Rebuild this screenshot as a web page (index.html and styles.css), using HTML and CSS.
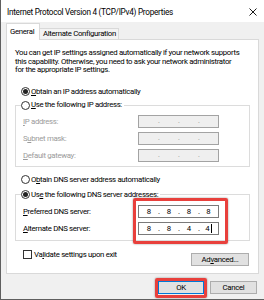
FILE: index.html
```html
<!DOCTYPE html>
<html>
<head>
<meta charset="utf-8">
<link rel="stylesheet" href="styles.css">
</head>
<body>
<div class="window">
  <div class="titlebar">
    <span class="title">Internet Protocol Version 4 (TCP/IPv4) Properties</span>
    <svg class="close" width="8" height="8" viewBox="0 0 8 8"><path d="M0.5 0.5L7.5 7.5M7.5 0.5L0.5 7.5" stroke="#1a1a1a" stroke-width="1" fill="none"/></svg>
  </div>
  <div class="main">
    <div class="tabs">
      <div class="tab active">General</div>
      <div class="tab alt">Alternate Configuration</div>
    </div>
    <div class="panel">
      <p class="desc">You can get IP settings assigned automatically if your network supports<br>this capability. Otherwise, you need to ask your network administrator<br>for the appropriate IP settings.</p>
      <div class="opt first"><span class="radio on"></span><span><u>O</u>btain an IP address automatically</span></div>
      <fieldset class="group g1">
        <legend class="opt"><span class="radio"></span><span><u>U</u>se the following IP address:</span></legend>
        <div class="row disabled"><span class="lbl"><u>I</u>P address:</span><span class="ip"><span class="seg"></span><span class="dot">.</span><span class="seg"></span><span class="dot">.</span><span class="seg"></span><span class="dot">.</span><span class="seg"></span></span></div>
        <div class="row disabled"><span class="lbl">S<u>u</u>bnet mask:</span><span class="ip"><span class="seg"></span><span class="dot">.</span><span class="seg"></span><span class="dot">.</span><span class="seg"></span><span class="dot">.</span><span class="seg"></span></span></div>
        <div class="row disabled"><span class="lbl"><u>D</u>efault gateway:</span><span class="ip"><span class="seg"></span><span class="dot">.</span><span class="seg"></span><span class="dot">.</span><span class="seg"></span><span class="dot">.</span><span class="seg"></span></span></div>
      </fieldset>
      <div class="opt second"><span class="radio"></span><span>O<u>b</u>tain DNS server address automatically</span></div>
      <fieldset class="group g2">
        <legend class="opt"><span class="radio on"></span><span>Us<u>e</u> the following DNS server addresses:</span></legend>
        <div class="rows">
          <div class="row"><span class="lbl"><u>P</u>referred DNS server:</span><span class="ip"><span class="seg">8</span><span class="dot">.</span><span class="seg">8</span><span class="dot">.</span><span class="seg">8</span><span class="dot">.</span><span class="seg">8</span></span></div>
          <div class="row"><span class="lbl"><u>A</u>lternate DNS server:</span><span class="ip"><span class="seg">8</span><span class="dot">.</span><span class="seg">8</span><span class="dot">.</span><span class="seg">4</span><span class="dot">.</span><span class="seg">4<span class="caret"></span></span></span></div>
          <span class="mark mark-dns"></span>
        </div>
      </fieldset>
      <div class="bottom">
        <div class="check"><span class="box"></span><span>Va<u>l</u>idate settings upon exit</span></div>
        <button class="btn adv">Ad<u>v</u>anced...</button>
      </div>
    </div>
    <div class="footer">
      <div class="okwrap"><button class="btn ok">OK</button><span class="mark mark-ok"></span></div>
      <button class="btn cancel">Cancel</button>
    </div>
  </div>
</div>
</body>
</html>
```
FILE: styles.css
```css
* { box-sizing: border-box; }
body {
  margin: 0;
  font-family: Roboto, "Noto Sans", sans-serif;
  font-size: 7.8px;
  letter-spacing: -0.33px;
  color: #000;
}
u { text-underline-offset: 1px; }
.window {
  width: 264px;
  height: 300px;
  background: #f0f0f0;
  border-left: 1px solid #5f5f5f;
  border-bottom: 1px solid #5f5f5f;
  display: flex;
  flex-direction: column;
  overflow: hidden;
}
.titlebar {
  height: 22px;
  flex: none;
  background: #fff;
  display: flex;
  align-items: center;
  padding: 1px 7px 0 6px;
}
.title {
  flex: 1;
  font-size: 8.2px;
  letter-spacing: -0.27px;
  white-space: nowrap;
}
.close { display: block; flex: none; }
.main {
  padding: 1px 5px 0 5px;
  display: flex;
  flex-direction: column;
}
.tabs {
  display: flex;
  align-items: flex-end;
  height: 17px;
  margin-bottom: -1px;
  position: relative;
  z-index: 1;
}
.tab {
  border: 1px solid #d9d9d9;
  border-bottom: none;
  white-space: nowrap;
}
.tab.active {
  width: 34px;
  height: 17px;
  background: #fff;
  padding: 3px 0 0 3px;
  line-height: 10px;
}
.tab.alt {
  width: 80px;
  height: 11px;
  margin-left: -1px;
  margin-bottom: 1px;
  background: #f3f3f3;
  padding: 0 0 0 3px;
  line-height: 9px;
}
.panel {
  background: #fff;
  border: 1px solid #d9d9d9;
  padding: 9px 8px 7px 8px;
  display: flex;
  flex-direction: column;
}
.desc {
  margin: 0;
  line-height: 8.5px;
  white-space: nowrap;
}
.opt {
  display: flex;
  align-items: center;
  height: 10px;
  line-height: 10px;
  padding-left: 6px;
  white-space: nowrap;
}
.opt.first { margin-top: 12px; }
.opt.second { margin-top: 7.5px; }
.radio {
  width: 9px;
  height: 9px;
  border: 1px solid #333;
  border-radius: 50%;
  background: #fff;
  margin-right: 1px;
  flex: none;
  display: flex;
  align-items: center;
  justify-content: center;
}
.radio.on::after {
  content: "";
  width: 5px;
  height: 5px;
  border-radius: 50%;
  background: #222;
}
.group {
  margin: 0;
  border: 1px solid #dcdcdc;
  padding: 5px 7px 4px 5px;
  min-width: 0;
}
.group legend.opt {
  padding: 0 2px 0 0;
}
.g1 { margin-top: 3.5px; }
.g2 { margin-top: 5px; padding-bottom: 5px; }
.rows { position: relative; }
.row {
  display: flex;
  align-items: center;
  height: 13px;
  padding-left: 2px;
  white-space: nowrap;
}
.row + .row { margin-top: 4px; }
.lbl { width: 115px; flex: none; }
.ip {
  width: 81px;
  height: 13px;
  flex: none;
  border: 1px solid #7a7a7a;
  background: #fff;
  display: flex;
  align-items: center;
  line-height: 11px;
  letter-spacing: 0;
}
.seg { width: 20px; text-align: center; flex: none; }
.seg:last-child { width: 19px; }
.dot { width: 0; display: flex; justify-content: center; flex: none; }
.row.disabled .lbl { color: #9b9b9b; }
.row.disabled .ip { background: #efefef; border-color: #a3a3a3; }
.row.disabled .dot { color: #8a8a8a; font-size: 7px; }
.caret {
  display: inline-block;
  width: 1px;
  height: 9px;
  background: #000;
  vertical-align: -2px;
  margin-left: 1px;
}
.mark {
  position: absolute;
  border: 3px solid #e8403c;
  border-radius: 2px;
  box-shadow: 0 0 2px rgba(0, 0, 0, 0.45);
  pointer-events: none;
}
.mark-dns {
  left: 112px;
  top: -7px;
  width: 95px;
  height: 46px;
}
.bottom {
  display: flex;
  justify-content: space-between;
  align-items: flex-start;
  margin-top: 9px;
}
.check {
  display: flex;
  align-items: center;
  height: 10px;
  padding-left: 8px;
  white-space: nowrap;
}
.box {
  width: 9px;
  height: 9px;
  border: 1px solid #333;
  background: #fff;
  margin-right: 2px;
}
.btn {
  font: inherit;
  letter-spacing: inherit;
  color: #000;
  height: 13px;
  background: #e1e1e1;
  border: 1px solid #adadad;
  padding: 0;
  line-height: 11px;
  display: block;
}
.adv {
  width: 58px;
  margin-top: 3px;
  margin-right: 1px;
}
.footer {
  display: flex;
  justify-content: flex-end;
  gap: 6px;
  margin-top: 7px;
  padding-right: 2px;
}
.okwrap { position: relative; }
.ok { width: 46px; border-color: #0078d7; }
.cancel { width: 47px; }
.mark-ok {
  left: -3px;
  top: -3px;
  width: 52px;
  height: 20px;
}
```
